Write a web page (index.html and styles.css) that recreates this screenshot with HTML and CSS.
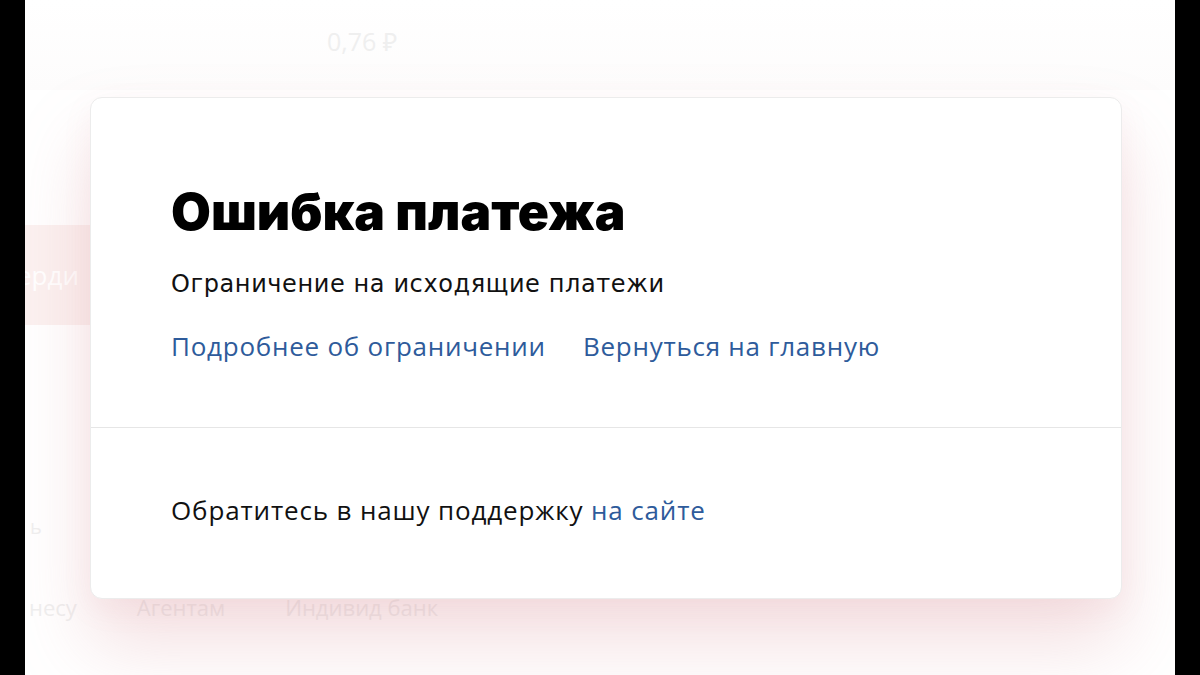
FILE: index.html
```html
<!DOCTYPE html>
<html lang="ru">
<head>
  <meta charset="UTF-8" />
  <title>Ошибка платежа</title>
  <link rel="stylesheet" href="styles.css">
</head>
<body>

<div class="page">
  <div class="bg-top">
    <span class="bg-sum">0,76 ₽</span>
  </div>
  <div class="bg-side">ерди</div>
  <div class="bg-letter">ь</div>
  <div class="bg-menu">
    <span>несу</span>
    <span>Агентам</span>
    <span>Индивид банк</span>
  </div>

  <div class="modal">
    <div class="modal-main">
      <h1>Ошибка платежа</h1>
      <p class="reason">Ограничение на исходящие платежи</p>
      <div class="links">
        <a href="#">Подробнее об ограничении</a>
        <a href="#">Вернуться на главную</a>
      </div>
    </div>
    <div class="modal-foot">
      Обратитесь в нашу поддержку <a href="#">на сайте</a>
    </div>
  </div>
</div>

</body>
</html>
```

FILE: styles.css
```css
:root {
  --link: #2e5b9b;
  --text: #111;
  --faint: #efefef;
}
body {
  margin: 0;
  background: #000;
  font-family: "Open Sans", "Noto Sans", sans-serif;
}
.page {
  position: relative;
  margin: 0 25px;
  height: 675px;
  background: #fff;
  overflow: hidden;
}
.bg-top {
  height: 90px;
  padding-left: 302px;
  background: linear-gradient(#fff, #fdfcfc);
}
.bg-sum {
  display: inline-block;
  margin-top: 24px;
  font-size: 25px;
  color: var(--faint);
}
.bg-side {
  margin-top: 135px;
  width: 65px;
  height: 100px;
  line-height: 100px;
  background: #fbf1f0;
  color: #fff;
  font-size: 26px;
  text-indent: -8px;
  overflow: hidden;
}
.bg-letter {
  margin-top: 188px;
  padding-left: 5px;
  color: var(--faint);
  font-size: 20px;
}
.bg-menu {
  display: flex;
  gap: 60px;
  margin-top: 52px;
  padding-left: 4px;
  font-size: 22px;
  color: var(--faint);
}
.modal {
  position: absolute;
  top: 97px;
  left: 65px;
  width: 1030px;
  height: 500px;
  background: #fff;
  border: 1px solid #ececec;
  border-radius: 12px;
  box-shadow: 0 45px 75px rgba(214, 130, 140, 0.26), 0 10px 30px rgba(214, 130, 140, 0.08);
}
.modal-main {
  height: 330px;
  padding: 82px 0 0 80px;
  box-sizing: border-box;
  border-bottom: 1px solid #e6e6e6;
}
h1 {
  margin: 0;
  font-family: Inter, "Noto Sans", sans-serif;
  font-weight: 900;
  font-size: 51.5px;
  line-height: 62px;
  color: #000;
}
.reason {
  margin: 27px 0 0;
  font-family: "DejaVu Sans", sans-serif;
  font-size: 24px;
  letter-spacing: 0.6px;
  line-height: 30px;
  color: var(--text);
}
.links {
  display: flex;
  gap: 37px;
  margin-top: 31px;
  font-size: 26px;
  letter-spacing: 0.75px;
  line-height: 32px;
}
a {
  color: var(--link);
  text-decoration: none;
}
.modal-foot {
  padding: 66px 0 0 80px;
  font-size: 26px;
  letter-spacing: 0.85px;
  line-height: 32px;
  color: var(--text);
}
```
